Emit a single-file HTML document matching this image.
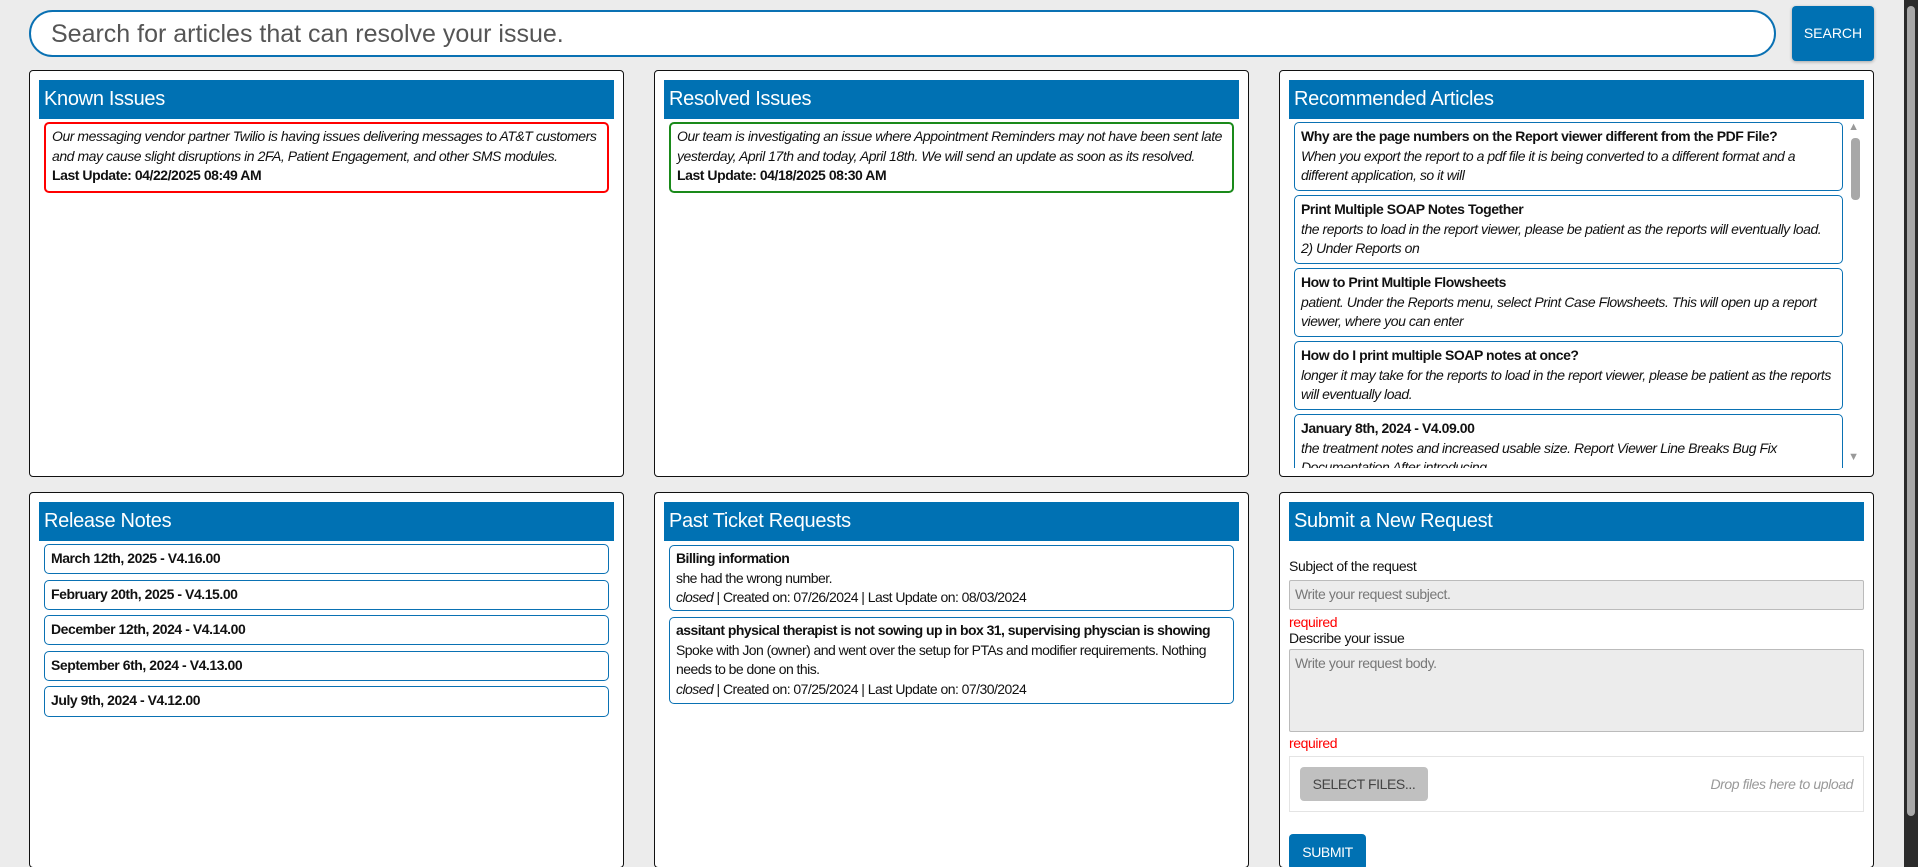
<!DOCTYPE html>
<html style="width:1918px;height:867px;overflow:hidden"><head><meta charset="utf-8"><style>
*{box-sizing:border-box;margin:0;padding:0}
body{width:1918px;height:867px;overflow:hidden;background:#ececec;font-family:"Liberation Sans",Arial,sans-serif;color:#111;position:relative}
.search{position:absolute;left:29px;top:10px;width:1747px;height:47px;border:2px solid #0a71b3;border-radius:24px;background:#fff;font-size:25px;color:#555;padding:10px 20px;line-height:24px}
.sbtn{position:absolute;left:1792px;top:6px;width:82px;height:55px;background:#0071b3;border-radius:4px;color:#fff;font-size:14px;text-align:center;line-height:55px;box-shadow:0 1px 3px rgba(0,0,0,.3)}
.panel{position:absolute;background:#fff;border:1px solid #111;border-radius:4px;overflow:hidden}
.hd{position:absolute;left:9px;right:9px;top:9px;height:39px;background:#0071b3;color:#fff;font-size:20px;line-height:39px;padding-left:5px;letter-spacing:-0.3px}
.card{position:absolute;left:14px;right:14px;border:1px solid #0a71b3;border-radius:5px;padding:4px 6px;font-size:14px;line-height:19.5px;letter-spacing:-0.45px}
.card b{font-weight:bold}
i{font-style:italic}
.sb{position:absolute;right:0;top:0;width:14px;height:867px;background:#2b2b2b}
.sb div{position:absolute;left:3px;top:6px;width:8px;height:810px;background:#a8a8a8;border-radius:4px}
.lbl{position:absolute;left:9px;font-size:14px;letter-spacing:-0.4px}
.req{position:absolute;left:9px;font-size:14px;color:#f00;letter-spacing:-0.4px}
.inp{position:absolute;left:9px;right:9px;background:#ececec;border:1px solid #bbb;border-radius:2px;font-size:14px;color:#777;padding:5px 5px;letter-spacing:-0.4px}
</style></head><body>
<div class="search">Search for articles that can resolve your issue.</div>
<div class="sbtn">SEARCH</div>

<div class="panel" style="left:29px;top:70px;width:595px;height:407px">
<div class="hd">Known Issues</div>
<div class="card" style="top:51px;height:71px;border:2px solid #f00;padding-top:3px"><i>Our messaging vendor partner Twilio is having issues delivering messages to AT&amp;T customers and may cause slight disruptions in 2FA, Patient Engagement, and other SMS modules.</i><br><b>Last Update: 04/22/2025 08:49 AM</b></div>
</div>

<div class="panel" style="left:654px;top:70px;width:595px;height:407px">
<div class="hd">Resolved Issues</div>
<div class="card" style="top:51px;height:71px;border:2px solid #1a8a1a;padding-top:3px"><i>Our team is investigating an issue where Appointment Reminders may not have been sent late yesterday, April 17th and today, April 18th. We will send an update as soon as its resolved.</i><br><b>Last Update: 04/18/2025 08:30 AM</b></div>
</div>

<div class="panel" style="left:1279px;top:70px;width:595px;height:407px">
<div class="hd">Recommended Articles</div>
<div style="position:absolute;left:0;right:0;top:50px;height:347px;overflow:hidden">
<div class="card" style="top:1px;right:30px;height:69px"><b>Why are the page numbers on the Report viewer different from the PDF File?</b><br><i>When you export the report to a pdf file it is being converted to a different format and a different application, so it will</i></div>
<div class="card" style="top:74px;right:30px;height:69px"><b>Print Multiple SOAP Notes Together</b><br><i>the reports to load in the report viewer, please be patient as the reports will eventually load. 2) Under Reports on</i></div>
<div class="card" style="top:147px;right:30px;height:69px"><b>How to Print Multiple Flowsheets</b><br><i>patient. Under the Reports menu, select Print Case Flowsheets. This will open up a report viewer, where you can enter</i></div>
<div class="card" style="top:220px;right:30px;height:69px"><b>How do I print multiple SOAP notes at once?</b><br><i>longer it may take for the reports to load in the report viewer, please be patient as the reports will eventually load.</i></div>
<div class="card" style="top:293px;right:30px;height:69px"><b>January 8th, 2024 - V4.09.00</b><br><i>the treatment notes and increased usable size. Report Viewer Line Breaks Bug Fix Documentation After introducing</i></div>
<div style="position:absolute;right:14px;top:0px;font-size:11px;color:#999">▲</div>
<div style="position:absolute;right:14px;top:330px;font-size:11px;color:#999">▼</div>
<div style="position:absolute;right:13px;top:17px;width:9px;height:62px;background:#a8a8a8;border-radius:4px"></div>
</div>
</div>

<div class="panel" style="left:29px;top:492px;width:595px;height:376px">
<div class="hd">Release Notes</div>
<div class="card" style="top:51px;height:30px"><b>March 12th, 2025 - V4.16.00</b></div>
<div class="card" style="top:87px;height:30px"><b>February 20th, 2025 - V4.15.00</b></div>
<div class="card" style="top:122px;height:30px"><b>December 12th, 2024 - V4.14.00</b></div>
<div class="card" style="top:158px;height:30px"><b>September 6th, 2024 - V4.13.00</b></div>
<div class="card" style="top:193px;height:31px"><b>July 9th, 2024 - V4.12.00</b></div>
</div>

<div class="panel" style="left:654px;top:492px;width:595px;height:376px">
<div class="hd">Past Ticket Requests</div>
<div class="card" style="top:52px;height:66px;padding-top:3px;letter-spacing:-0.55px"><b>Billing information</b><br>she had the wrong number.<br><i>closed</i> | Created on: 07/26/2024 | Last Update on: 08/03/2024</div>
<div class="card" style="top:124px;height:87px;padding-top:3px;letter-spacing:-0.55px"><b>assitant physical therapist is not sowing up in box 31, supervising physcian is showing</b><br>Spoke with Jon (owner) and went over the setup for PTAs and modifier requirements. Nothing needs to be done on this.<br><i>closed</i> | Created on: 07/25/2024 | Last Update on: 07/30/2024</div>
</div>

<div class="panel" style="left:1279px;top:492px;width:595px;height:376px">
<div class="hd">Submit a New Request</div>
<div class="lbl" style="top:65px">Subject of the request</div>
<div class="inp" style="top:87px;height:30px">Write your request subject.</div>
<div class="req" style="top:121px">required</div>
<div class="lbl" style="top:137px">Describe your issue</div>
<div class="inp" style="top:156px;height:83px">Write your request body.</div>
<div class="req" style="top:242px">required</div>
<div style="position:absolute;left:9px;right:9px;top:263px;height:56px;border:1px solid #e4e4e4">
<div style="position:absolute;left:10px;top:10px;width:128px;height:34px;background:#c0c0c0;border-radius:4px;color:#444;font-size:14px;letter-spacing:-0.4px;line-height:34px;text-align:center">SELECT FILES...</div>
<div style="position:absolute;right:10px;top:19px;font-size:14px;letter-spacing:-0.4px;color:#999;font-style:italic">Drop files here to upload</div>
</div>
<div style="position:absolute;left:9px;top:341px;width:77px;height:36px;background:#0071b3;border-radius:4px;color:#fff;font-size:14px;letter-spacing:-0.4px;line-height:36px;text-align:center">SUBMIT</div>
</div>

<div class="sb"><div></div></div>
</body></html>
